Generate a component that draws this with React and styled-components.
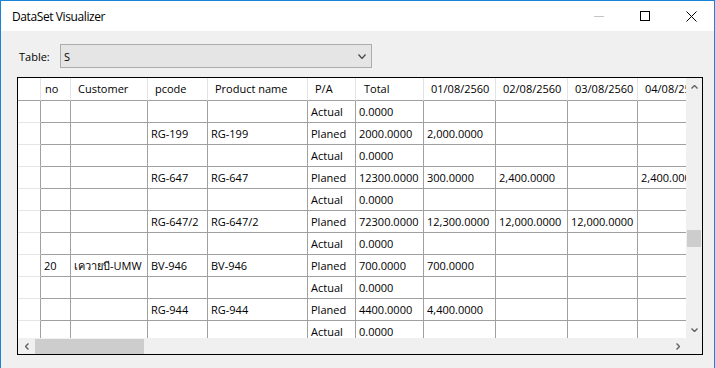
import React from 'react';
import styled, {createGlobalStyle} from 'styled-components';

const columns = [
    {key: 'rh', w: 23, rowHeader: true},
    {key: 'no', title: 'no', w: 30, hp: 4},
    {key: 'customer', title: 'Customer', w: 77},
    {key: 'pcode', title: 'pcode', w: 60},
    {key: 'name', title: 'Product name', w: 100},
    {key: 'pa', title: 'P/A', w: 48},
    {key: 'total', title: 'Total', w: 68, hp: 8},
    {key: 'd1', title: '01/08/2560', w: 72},
    {key: 'd2', title: '02/08/2560', w: 72},
    {key: 'd3', title: '03/08/2560', w: 70},
    {key: 'd4', title: '04/08/2560', w: 72},
];

const rows = [
    {pa: 'Actual', total: '0.0000'},
    {pcode: 'RG-199', name: 'RG-199', pa: 'Planed', total: '2000.0000', d1: '2,000.0000'},
    {pa: 'Actual', total: '0.0000'},
    {pcode: 'RG-647', name: 'RG-647', pa: 'Planed', total: '12300.0000', d1: '300.0000', d2: '2,400.0000', d4: '2,400.0000'},
    {pa: 'Actual', total: '0.0000'},
    {pcode: 'RG-647/2', name: 'RG-647/2', pa: 'Planed', total: '72300.0000', d1: '12,300.0000', d2: '12,000.0000', d3: '12,000.0000'},
    {pa: 'Actual', total: '0.0000'},
    {no: '20', customer: 'เควายบี-UMW', pcode: 'BV-946', name: 'BV-946', pa: 'Planed', total: '700.0000', d1: '700.0000'},
    {pa: 'Actual', total: '0.0000'},
    {pcode: 'RG-944', name: 'RG-944', pa: 'Planed', total: '4400.0000', d1: '4,400.0000'},
    {pa: 'Actual', total: '0.0000'},
];

const Chevron = ({dir, color = '#606060', w = 7, h = 4, sw = 1.4}) => {
    const pts = {
        down: `0.5,0.5 ${w / 2},${h - 0.5} ${w - 0.5},0.5`,
        up: `0.5,${h - 0.5} ${w / 2},0.5 ${w - 0.5},${h - 0.5}`,
    };
    if (dir === 'left' || dir === 'right') {
        const p = dir === 'left'
            ? `${h - 0.5},0.5 0.5,${w / 2} ${h - 0.5},${w - 0.5}`
            : `0.5,0.5 ${h - 0.5},${w / 2} 0.5,${w - 0.5}`;
        return (
            <svg width={h} height={w} viewBox={`0 0 ${h} ${w}`}>
                <polyline points={p} fill="none" stroke={color} strokeWidth={sw} />
            </svg>
        );
    }
    return (
        <svg width={w} height={h} viewBox={`0 0 ${w} ${h}`}>
            <polyline points={pts[dir]} fill="none" stroke={color} strokeWidth={sw} />
        </svg>
    );
};

export default function App() {
    return (
        <>
            <GlobalStyle />
            <Window>
                <TitleBar>
                    <Title>DataSet Visualizer</Title>
                    <CaptionButton>
                        <MinGlyph />
                    </CaptionButton>
                    <CaptionButton>
                        <MaxGlyph />
                    </CaptionButton>
                    <CaptionButton>
                        <svg width="11" height="11" viewBox="0 0 11 11">
                            <path d="M0.5 0.5 L10.5 10.5 M10.5 0.5 L0.5 10.5" stroke="#000" strokeWidth="1" />
                        </svg>
                    </CaptionButton>
                </TitleBar>
                <Body>
                    <TableRow>
                        <Label>Table:</Label>
                        <Combo>
                            <span>S</span>
                            <ComboArrow>
                                <Chevron dir="down" color="#444" w={8} h={5} sw={1.2} />
                            </ComboArrow>
                        </Combo>
                    </TableRow>
                    <Grid>
                        <Content>
                            <HeaderRow>
                                {columns.map(c => (
                                    <HeaderCell key={c.key} $w={c.w} $pad={c.hp || 7}>
                                        {c.title}
                                    </HeaderCell>
                                ))}
                            </HeaderRow>
                            {rows.map((r, i) => (
                                <Row key={i}>
                                    {columns.map(c => c.rowHeader
                                        ? <RowHeaderCell key={c.key} $w={c.w} />
                                        : <Cell key={c.key} $w={c.w}>{r[c.key]}</Cell>
                                    )}
                                </Row>
                            ))}
                        </Content>
                        <VScroll>
                            <ArrowBox $h={17}><Chevron dir="up" /></ArrowBox>
                            <VTrack>
                                <VThumb $offset={135} />
                            </VTrack>
                            <ArrowBox $h={17}><Chevron dir="down" /></ArrowBox>
                        </VScroll>
                        <HScroll>
                            <ArrowBox $w={17}><Chevron dir="left" /></ArrowBox>
                            <HTrack>
                                <HThumb $size={109} />
                            </HTrack>
                            <ArrowBox $w={17}><Chevron dir="right" /></ArrowBox>
                        </HScroll>
                        <Corner />
                    </Grid>
                </Body>
            </Window>
        </>
    );
}

const GlobalStyle = createGlobalStyle`
    html, body {
        margin: 0;
        padding: 0;
        background: #ffffff;
    }
    body {
        font-family: "Open Sans", "Noto Sans", "DejaVu Sans", sans-serif;
        color: #000;
    }
`;

const Window = styled.div`
    width: 715px;
    height: 368px;
    box-sizing: border-box;
    border: 1px solid #1883d7;
    border-bottom: none;
    background: #f0f0f0;
    display: flex;
    flex-direction: column;
    overflow: hidden;
`;

const TitleBar = styled.div`
    height: 30px;
    flex-shrink: 0;
    background: #ffffff;
    display: flex;
    align-items: center;
`;

const Title = styled.div`
    flex: 1;
    padding-left: 11px;
    font-size: 12px;
    letter-spacing: -0.4px;
`;

const CaptionButton = styled.div`
    width: 46px;
    height: 30px;
    display: flex;
    align-items: center;
    justify-content: center;
`;

const MinGlyph = styled.div`
    width: 10px;
    height: 1px;
    background: #c4c4c4;
`;

const MaxGlyph = styled.div`
    width: 10px;
    height: 10px;
    box-sizing: border-box;
    border: 1px solid #000;
`;

const Body = styled.div`
    flex: 1;
    padding: 13px 0 0 16px;
    display: flex;
    flex-direction: column;
`;

const TableRow = styled.div`
    display: flex;
    align-items: center;
    height: 24px;
`;

const Label = styled.div`
    width: 41px;
    padding-left: 2px;
    font-size: 11px;
`;

const Combo = styled.div`
    width: 312px;
    height: 24px;
    box-sizing: border-box;
    border: 1px solid #adadad;
    background: #e5e5e5;
    display: flex;
    align-items: center;
    padding-left: 3px;
    font-size: 11px;
`;

const ComboArrow = styled.div`
    margin-left: auto;
    margin-right: 5px;
    display: flex;
`;

const Grid = styled.div`
    margin-top: 9px;
    width: 686px;
    height: 278px;
    box-sizing: border-box;
    border: 1px solid #000;
    background: #f0f0f0;
    display: grid;
    grid-template-columns: 668px 16px;
    grid-template-rows: 260px 16px;
`;

const Content = styled.div`
    overflow: hidden;
    background: #ffffff;
    font-size: 11px;
`;

const HeaderRow = styled.div`
    display: flex;
    height: 23px;
`;

const HeaderCell = styled.div`
    flex-shrink: 0;
    width: ${p => p.$w}px;
    box-sizing: border-box;
    border-right: 1px solid #e3e3e3;
    border-bottom: 1px solid #a0a0a0;
    padding-left: ${p => p.$pad}px;
    line-height: 22px;
    white-space: nowrap;
    overflow: hidden;
`;

const Row = styled.div`
    display: flex;
    height: 22px;
`;

const Cell = styled.div`
    flex-shrink: 0;
    width: ${p => p.$w}px;
    box-sizing: border-box;
    border-right: 1px solid #a0a0a0;
    border-bottom: 1px solid #a0a0a0;
    padding-left: 3px;
    line-height: 21px;
    white-space: nowrap;
    overflow: hidden;
`;

const RowHeaderCell = styled.div`
    flex-shrink: 0;
    width: ${p => p.$w}px;
    box-sizing: border-box;
    border-right: 1px solid #a0a0a0;
    border-bottom: 1px solid #e6e6e6;
`;

const VScroll = styled.div`
    display: flex;
    flex-direction: column;
    background: #f0f0f0;
`;

const HScroll = styled.div`
    display: flex;
    background: #f0f0f0;
`;

const ArrowBox = styled.div`
    flex-shrink: 0;
    width: ${p => (p.$w ? `${p.$w}px` : 'auto')};
    height: ${p => (p.$h ? `${p.$h}px` : 'auto')};
    display: flex;
    align-items: center;
    justify-content: center;
`;

const VTrack = styled.div`
    flex: 1;
    display: flex;
    flex-direction: column;
    align-items: center;
`;

const VThumb = styled.div`
    margin-top: ${p => p.$offset}px;
    width: 14px;
    height: 17px;
    background: #cdcdcd;
`;

const HTrack = styled.div`
    flex: 1;
    display: flex;
    align-items: center;
`;

const HThumb = styled.div`
    width: ${p => p.$size}px;
    height: 15px;
    margin-top: 1px;
    background: #cdcdcd;
`;

const Corner = styled.div`
    background: #f0f0f0;
`;
